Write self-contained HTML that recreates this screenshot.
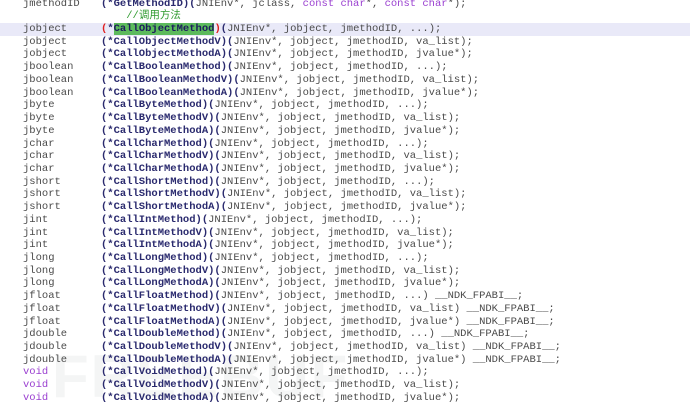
<!DOCTYPE html>
<html><head><meta charset="utf-8"><style>
html,body{margin:0;padding:0;width:690px;height:417px;overflow:hidden;background:#fff;position:relative}
.wm{position:absolute;left:52px;top:342px;font:bold 60px "Liberation Sans",sans-serif;color:#f4f5f5;letter-spacing:2px}
.box{position:absolute;left:0;top:-2.4px;width:690px;font:10.5px/12.72px "Liberation Mono","Noto Sans CJK SC",monospace;color:#4a4a4a}
.r{position:relative;height:12.72px;white-space:pre}
.t{position:absolute;left:23px}
.f{position:absolute;left:101px}
.n{color:#2a2a6e;font-weight:bold}
.k{color:#9a3fd0}
.hl{background:#e9e9f8}
.g{background:#5cba5c;color:#1c1c5c;font-weight:bold}
.red{color:#e02020;font-weight:bold}
.c{color:#2e9a2e}
</style></head><body>
<div class="wm">FREEBUF</div>
<div class="box">
<div class="r"><span class="t">jmethodID</span><span class="f"><span class="n">(*GetMethodID)(</span>JNIEnv*, jclass, <span class="k">const char</span>*, <span class="k">const char</span>*);</span></div>
<div class="r"><span class="f">    <span class="c">//调用方法</span></span></div>
<div class="r hl"><span class="t">jobject</span><span class="f"><span class="red">(</span><span class="n">*</span><span class="g">CallObjectMethod</span><span class="red">)</span><span class="n">(</span>JNIEnv*, jobject, jmethodID, ...);</span></div>
<div class="r"><span class="t">jobject</span><span class="f"><span class="n">(*CallObjectMethodV)(</span>JNIEnv*, jobject, jmethodID, va_list);</span></div>
<div class="r"><span class="t">jobject</span><span class="f"><span class="n">(*CallObjectMethodA)(</span>JNIEnv*, jobject, jmethodID, jvalue*);</span></div>
<div class="r"><span class="t">jboolean</span><span class="f"><span class="n">(*CallBooleanMethod)(</span>JNIEnv*, jobject, jmethodID, ...);</span></div>
<div class="r"><span class="t">jboolean</span><span class="f"><span class="n">(*CallBooleanMethodV)(</span>JNIEnv*, jobject, jmethodID, va_list);</span></div>
<div class="r"><span class="t">jboolean</span><span class="f"><span class="n">(*CallBooleanMethodA)(</span>JNIEnv*, jobject, jmethodID, jvalue*);</span></div>
<div class="r"><span class="t">jbyte</span><span class="f"><span class="n">(*CallByteMethod)(</span>JNIEnv*, jobject, jmethodID, ...);</span></div>
<div class="r"><span class="t">jbyte</span><span class="f"><span class="n">(*CallByteMethodV)(</span>JNIEnv*, jobject, jmethodID, va_list);</span></div>
<div class="r"><span class="t">jbyte</span><span class="f"><span class="n">(*CallByteMethodA)(</span>JNIEnv*, jobject, jmethodID, jvalue*);</span></div>
<div class="r"><span class="t">jchar</span><span class="f"><span class="n">(*CallCharMethod)(</span>JNIEnv*, jobject, jmethodID, ...);</span></div>
<div class="r"><span class="t">jchar</span><span class="f"><span class="n">(*CallCharMethodV)(</span>JNIEnv*, jobject, jmethodID, va_list);</span></div>
<div class="r"><span class="t">jchar</span><span class="f"><span class="n">(*CallCharMethodA)(</span>JNIEnv*, jobject, jmethodID, jvalue*);</span></div>
<div class="r"><span class="t">jshort</span><span class="f"><span class="n">(*CallShortMethod)(</span>JNIEnv*, jobject, jmethodID, ...);</span></div>
<div class="r"><span class="t">jshort</span><span class="f"><span class="n">(*CallShortMethodV)(</span>JNIEnv*, jobject, jmethodID, va_list);</span></div>
<div class="r"><span class="t">jshort</span><span class="f"><span class="n">(*CallShortMethodA)(</span>JNIEnv*, jobject, jmethodID, jvalue*);</span></div>
<div class="r"><span class="t">jint</span><span class="f"><span class="n">(*CallIntMethod)(</span>JNIEnv*, jobject, jmethodID, ...);</span></div>
<div class="r"><span class="t">jint</span><span class="f"><span class="n">(*CallIntMethodV)(</span>JNIEnv*, jobject, jmethodID, va_list);</span></div>
<div class="r"><span class="t">jint</span><span class="f"><span class="n">(*CallIntMethodA)(</span>JNIEnv*, jobject, jmethodID, jvalue*);</span></div>
<div class="r"><span class="t">jlong</span><span class="f"><span class="n">(*CallLongMethod)(</span>JNIEnv*, jobject, jmethodID, ...);</span></div>
<div class="r"><span class="t">jlong</span><span class="f"><span class="n">(*CallLongMethodV)(</span>JNIEnv*, jobject, jmethodID, va_list);</span></div>
<div class="r"><span class="t">jlong</span><span class="f"><span class="n">(*CallLongMethodA)(</span>JNIEnv*, jobject, jmethodID, jvalue*);</span></div>
<div class="r"><span class="t">jfloat</span><span class="f"><span class="n">(*CallFloatMethod)(</span>JNIEnv*, jobject, jmethodID, ...) __NDK_FPABI__;</span></div>
<div class="r"><span class="t">jfloat</span><span class="f"><span class="n">(*CallFloatMethodV)(</span>JNIEnv*, jobject, jmethodID, va_list) __NDK_FPABI__;</span></div>
<div class="r"><span class="t">jfloat</span><span class="f"><span class="n">(*CallFloatMethodA)(</span>JNIEnv*, jobject, jmethodID, jvalue*) __NDK_FPABI__;</span></div>
<div class="r"><span class="t">jdouble</span><span class="f"><span class="n">(*CallDoubleMethod)(</span>JNIEnv*, jobject, jmethodID, ...) __NDK_FPABI__;</span></div>
<div class="r"><span class="t">jdouble</span><span class="f"><span class="n">(*CallDoubleMethodV)(</span>JNIEnv*, jobject, jmethodID, va_list) __NDK_FPABI__;</span></div>
<div class="r"><span class="t">jdouble</span><span class="f"><span class="n">(*CallDoubleMethodA)(</span>JNIEnv*, jobject, jmethodID, jvalue*) __NDK_FPABI__;</span></div>
<div class="r"><span class="t k">void</span><span class="f"><span class="n">(*CallVoidMethod)(</span>JNIEnv*, jobject, jmethodID, ...);</span></div>
<div class="r"><span class="t k">void</span><span class="f"><span class="n">(*CallVoidMethodV)(</span>JNIEnv*, jobject, jmethodID, va_list);</span></div>
<div class="r"><span class="t k">void</span><span class="f"><span class="n">(*CallVoidMethodA)(</span>JNIEnv*, jobject, jmethodID, jvalue*);</span></div>
</div>
</body></html>
